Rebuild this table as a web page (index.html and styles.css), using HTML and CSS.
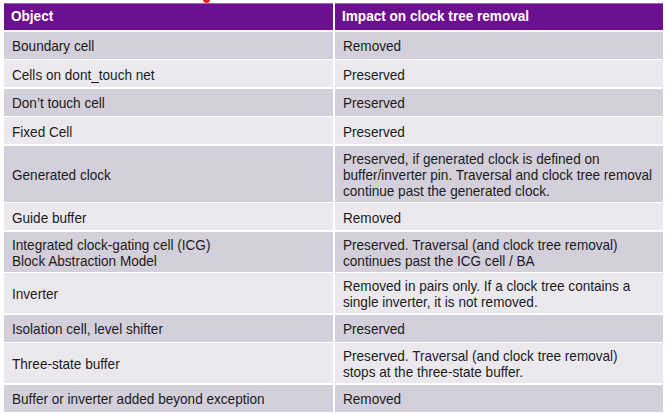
FILE: index.html
```html
<!DOCTYPE html>
<html>
<head>
<meta charset="utf-8">
<link rel="stylesheet" href="styles.css">
</head>
<body>
<div class="page">
  <span class="laser"></span>
  <div class="table">
    <div class="cell head"><span class="txt">Object</span></div>
    <div class="cell head"><span class="txt">Impact on clock tree removal</span></div>

    <div class="cell dark"><span class="txt">Boundary cell</span></div>
    <div class="cell dark"><span class="txt">Removed</span></div>

    <div class="cell light"><span class="txt">Cells on dont_touch net</span></div>
    <div class="cell light"><span class="txt">Preserved</span></div>

    <div class="cell dark"><span class="txt">Don’t touch cell</span></div>
    <div class="cell dark"><span class="txt">Preserved</span></div>

    <div class="cell light"><span class="txt">Fixed Cell</span></div>
    <div class="cell light"><span class="txt">Preserved</span></div>

    <div class="cell dark"><span class="txt">Generated clock</span></div>
    <div class="cell dark"><span class="txt">Preserved, if generated clock is defined on<br>buffer/inverter pin. Traversal and clock tree removal<br>continue past the generated clock.</span></div>

    <div class="cell light"><span class="txt">Guide buffer</span></div>
    <div class="cell light"><span class="txt">Removed</span></div>

    <div class="cell dark"><span class="txt">Integrated clock-gating cell (ICG)<br>Block Abstraction Model</span></div>
    <div class="cell dark"><span class="txt">Preserved. Traversal (and clock tree removal)<br>continues past the ICG cell / BA</span></div>

    <div class="cell light"><span class="txt">Inverter</span></div>
    <div class="cell light"><span class="txt">Removed in pairs only. If a clock tree contains a<br>single inverter, it is not removed.</span></div>

    <div class="cell dark"><span class="txt">Isolation cell, level shifter</span></div>
    <div class="cell dark"><span class="txt">Preserved</span></div>

    <div class="cell light"><span class="txt">Three-state buffer</span></div>
    <div class="cell light"><span class="txt">Preserved. Traversal (and clock tree removal)<br>stops at the three-state buffer.</span></div>

    <div class="cell dark"><span class="txt">Buffer or inverter added beyond exception</span></div>
    <div class="cell dark"><span class="txt">Removed</span></div>
  </div>
</div>
</body>
</html>
```

FILE: styles.css
```css
html, body {
  margin: 0;
  padding: 0;
  background: #ffffff;
}
.page {
  position: relative;
  width: 666px;
  height: 414px;
  overflow: hidden;
  padding: 3px 0 0 4px;
  box-sizing: border-box;
  font-family: "Liberation Sans", Arial, sans-serif;
  font-size: 15px;
  color: #1c1c1c;
}
.table {
  display: grid;
  grid-template-columns: 329px 328px;
  column-gap: 1.5px;
  row-gap: 1.5px;
}
.cell {
  min-height: 27px;
  box-sizing: border-box;
  padding: 5px 2px 3px 8px;
  line-height: 16px;
  display: flex;
  flex-direction: column;
  justify-content: center;
  align-items: flex-start;
  white-space: nowrap;
}
.txt {
  display: inline-block;
  transform: scaleX(0.905);
  transform-origin: left center;
}
.head {
  min-height: 27px;
  background: #6b1190;
  border-top: 1px solid #9a63b0;
  color: #ffffff;
  font-weight: bold;
  padding-top: 2px;
  padding-bottom: 4px;
  padding-left: 7px;
}
.dark {
  background: #d3cfdb;
}
.light {
  background: #ebe8ee;
}
.laser {
  position: absolute;
  left: 203px;
  top: -4px;
  width: 7px;
  height: 7px;
  border-radius: 50%;
  background: #e8201c;
}
```
